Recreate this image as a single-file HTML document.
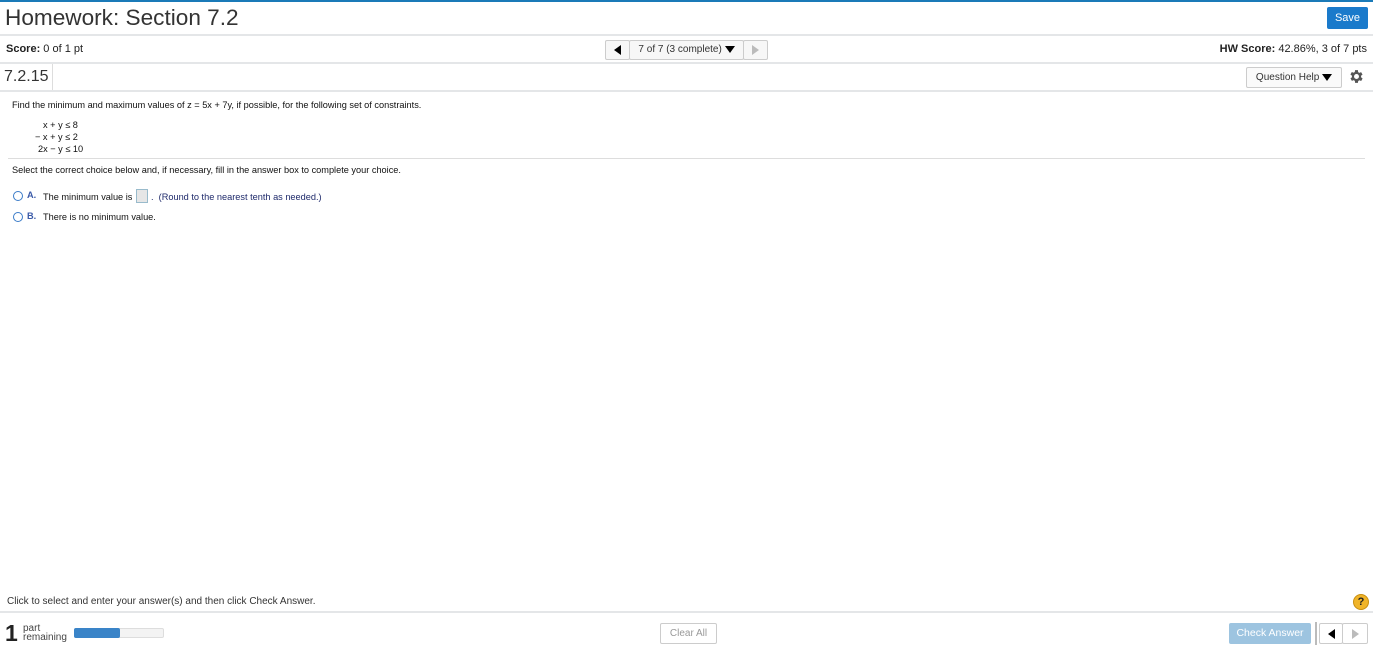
<!DOCTYPE html>
<html><head><style>
*{margin:0;padding:0;box-sizing:border-box}
body{width:1373px;height:656px;position:relative;background:#fff;font-family:"Liberation Sans",Arial,sans-serif;color:#222;overflow:hidden}
.a{position:absolute;white-space:nowrap}
.hl{position:absolute;left:0;width:1373px;height:2px;background:#e4e6e8}
.btn{position:absolute;border:1px solid #ccc;border-radius:2px;background:#f7f7f7;font-size:10px;color:#333;text-align:center}
.tri-l{display:inline-block;width:0;height:0;border-top:5px solid transparent;border-bottom:5px solid transparent;border-right:7px solid #000}
.tri-r{display:inline-block;width:0;height:0;border-top:5px solid transparent;border-bottom:5px solid transparent;border-left:7px solid #bbb}
.tri-d{display:inline-block;width:0;height:0;border-left:5px solid transparent;border-right:5px solid transparent;border-top:7px solid #000;vertical-align:middle}
.rad{position:absolute;width:10px;height:10px;border:1.5px solid #3a7bc8;border-radius:50%}
.s{font-size:9.2px;color:#111}
</style></head><body>
<div class="a" style="left:0;top:0;width:1373px;height:2px;background:#1a7ab8"></div>
<div class="a" style="left:5px;top:5px;font-size:22.6px;color:#333">Homework: Section 7.2</div>
<div class="a" style="left:1327px;top:7px;width:41px;height:22px;background:#1a7acb;border-radius:2px;color:#fff;font-size:11px;line-height:22px;text-align:center">Save</div>
<div class="hl" style="top:34px"></div>
<div class="a" style="left:6px;top:43px;font-size:11px"><b>Score:</b> 0 of 1 pt</div>
<div class="btn" style="left:605px;top:40px;width:25px;height:20px;padding-top:4px"><span class="tri-l"></span></div>
<div class="btn" style="left:629px;top:40px;width:115px;height:20px;line-height:18px">7 of 7 (3 complete) <span class="tri-d"></span></div>
<div class="btn" style="left:743px;top:40px;width:25px;height:20px;padding-top:4px"><span class="tri-r"></span></div>
<div class="a" style="right:6px;top:43px;font-size:11px"><b>HW Score:</b> 42.86%, 3 of 7 pts</div>
<div class="hl" style="top:62px"></div>
<div class="a" style="left:4px;top:68px;font-size:16px;color:#333">7.2.15</div>
<div class="a" style="left:52px;top:64px;width:1px;height:26px;background:#ddd"></div>
<div class="btn" style="left:1246px;top:67px;width:96px;height:21px;line-height:20px;background:#fafafa">Question Help <span class="tri-d"></span></div>
<svg class="a" style="left:1348px;top:68px" width="17" height="17" viewBox="0 0 24 24"><path fill="#555" fill-rule="evenodd" d="M19.4 13a7.5 7.5 0 000-2l2.1-1.6-2-3.5-2.5 1a7.6 7.6 0 00-1.7-1L15 3h-4l-.4 2.7a7.6 7.6 0 00-1.7 1l-2.5-1-2 3.5L6.6 11a7.5 7.5 0 000 2l-2.1 1.6 2 3.5 2.5-1a7.6 7.6 0 001.7 1L11 21h4l.4-2.7a7.6 7.6 0 001.7-1l2.5 1 2-3.5zM13 15.5a3.5 3.5 0 110-7 3.5 3.5 0 010 7z" transform="translate(-1 0)"/></svg>
<div class="hl" style="top:90px"></div>
<div class="a s" style="left:12px;top:100px">Find the minimum and maximum values of z = 5x + 7y, if possible, for the following set of constraints.</div>
<div class="a s" style="left:43px;top:120px">x + y ≤ 8</div>
<div class="a s" style="left:35px;top:132px">− x + y ≤ 2</div>
<div class="a s" style="left:38px;top:144px">2x − y ≤ 10</div>
<div class="a" style="left:8px;top:158px;width:1357px;height:1px;background:#ddd"></div>
<div class="a s" style="left:12px;top:165px">Select the correct choice below and, if necessary, fill in the answer box to complete your choice.</div>
<div class="rad" style="left:13px;top:191px"></div>
<div class="a s" style="left:27px;top:190px;color:#3a5aa8;font-weight:bold">A.</div>
<div class="a s" style="left:43px;top:192px">The minimum value is</div>
<div class="a" style="left:136px;top:189px;width:12px;height:14px;border:1px solid #9bc;background:#e6e6e6"></div>
<div class="a s" style="left:151px;top:192px;color:#1f2a6b">.&nbsp; (Round to the nearest tenth as needed.)</div>
<div class="rad" style="left:13px;top:212px"></div>
<div class="a s" style="left:27px;top:211px;color:#3a5aa8;font-weight:bold">B.</div>
<div class="a s" style="left:43px;top:212px">There is no minimum value.</div>
<div class="a" style="left:7px;top:596px;font-size:10px;color:#333">Click to select and enter your answer(s) and then click Check Answer.</div>
<div class="a" style="left:1353px;top:594px;width:16px;height:16px;border-radius:50%;background:#f0b429;border:1px solid #c98f10;font-size:11px;font-weight:bold;text-align:center;line-height:14px;color:#222">?</div>
<div class="hl" style="top:611px"></div>
<div class="a" style="left:5px;top:620px;font-size:23px;font-weight:bold;color:#222">1</div>
<div class="a" style="left:23px;top:624px;font-size:10px;line-height:9px;color:#444">part<br>remaining</div>
<div class="a" style="left:74px;top:628px;width:90px;height:10px;border:1px solid #ddd;border-radius:2px;background:#f3f3f3"></div>
<div class="a" style="left:74px;top:628px;width:46px;height:10px;border-radius:2px;background:#3a84c8"></div>
<div class="btn" style="left:660px;top:623px;width:57px;height:21px;line-height:20px;color:#999;background:#fff">Clear All</div>
<div class="a" style="left:1229px;top:623px;width:82px;height:21px;background:#9dc4e0;border-radius:2px;color:#fff;font-size:10.5px;line-height:21px;text-align:center">Check Answer</div>
<div class="a" style="left:1315px;top:622px;width:2px;height:23px;background:#bbb"></div>
<div class="btn" style="left:1319px;top:623px;width:24px;height:21px;padding-top:5px;background:#fff"><span class="tri-l"></span></div>
<div class="btn" style="left:1342px;top:623px;width:26px;height:21px;padding-top:5px;background:#fff"><span class="tri-r"></span></div>
</body></html>
